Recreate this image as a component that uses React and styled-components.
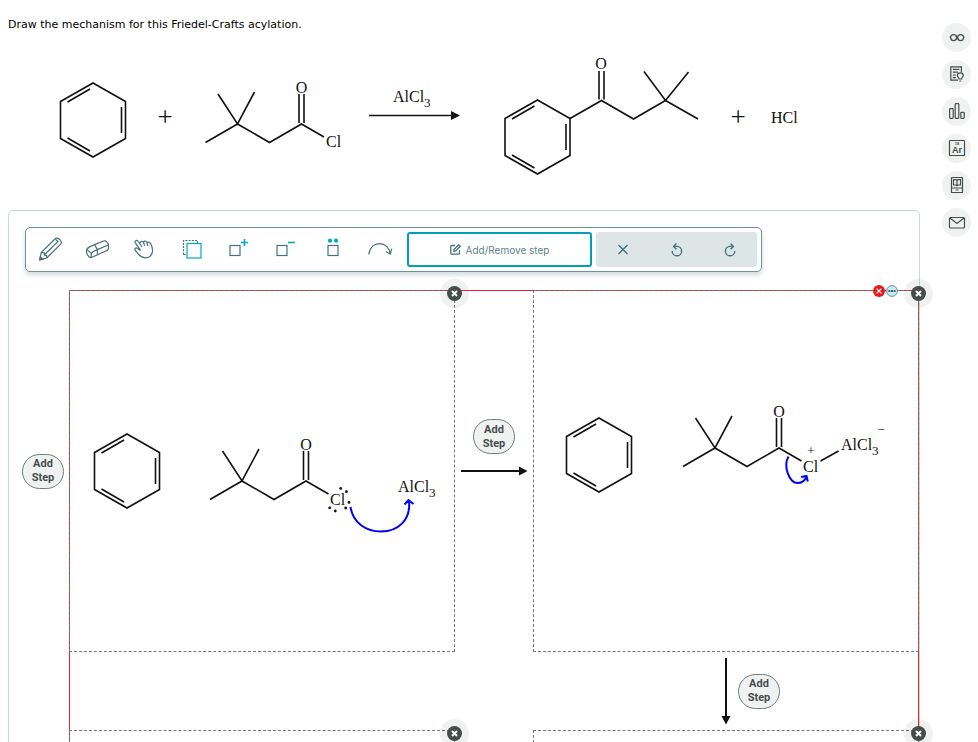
import React, { useState } from "react";
import styled, { createGlobalStyle } from "styled-components";

const INK = "#111111";
const SLATE = "#46717d";
const CYAN = "#00a9c9";
const GRAPHITE = "#454d4b";

/* ---------- chemistry drawing parts ---------- */

// ring centred on x, y
function Benzene({ x, y }) {
  return (
    <g transform={`translate(${x} ${y})`}>
      <path d="M0 -37 L32.5 -18.5 V18.5 L0 37 L-32.5 18.5 V-18.5 Z" />
      <path d="M-25.5 -18 L-3 -31 M28.5 -13 V13 M-25.5 18 L-3 31" />
    </g>
  );
}

// x, y is the carbonyl carbon
function AcylChloride({ x, y }) {
  return (
    <g transform={`translate(${x} ${y})`}>
      <path d="M-2.5 -1 V-30 M2.5 -1 V-30" />
      <path d="M22.5 13 L0 0 L-32 18.5 L-64 0 L-96 18.5 M-83.5 -30 L-64 0 L-47 -32" />
      <Atom x="0" y="-31" textAnchor="middle">
        O
      </Atom>
    </g>
  );
}

function AluminiumChloride({ x, y }) {
  return (
    <>
      <Atom x={x} y={y}>
        AlCl
      </Atom>
      <Atom x={x + 31} y={y + 5} $size={13}>
        3
      </Atom>
    </>
  );
}

function Reaction() {
  return (
    <Scheme viewBox="8 50 804 140" role="img" aria-label="Overall reaction">
      <Benzene x={93} y={120} />
      <Atom x="165" y="126" textAnchor="middle" $size={27}>
        +
      </Atom>
      <AcylChloride x={301.5} y={124} />
      <Atom x="326" y="147">
        Cl
      </Atom>

      <AluminiumChloride x={393} y={102} />
      <path d="M369 115.5 H452" />
      <path d="M451 111 L460 115.5 L451 120 Z" fill={INK} stroke="none" />

      <Benzene x={537.5} y={137} />
      <path d="M599 99.5 V71 M604 99.5 V71" />
      <path d="M570 118.5 L601.5 100.5 L633.5 119 L665.5 100.5 L698 119 M644 71.5 L665.5 100.5 L688.5 72" />
      <Atom x="601" y="69" textAnchor="middle">
        O
      </Atom>
      <Atom x="738" y="126" textAnchor="middle" $size={27}>
        +
      </Atom>
      <Atom x="771" y="123">
        HCl
      </Atom>
    </Scheme>
  );
}

function StepOneDrawing() {
  return (
    <StepDrawing viewBox="1 1 384 360" role="img" aria-label="Step 1">
      <Benzene x={58} y={181} />
      <AcylChloride x={237} y={191} />
      <Atom x="261" y="215">
        Cl
      </Atom>
      <g fill={INK} stroke="none">
        <circle cx="271.7" cy="198.4" r="1.4" />
        <circle cx="277.4" cy="201.7" r="1.4" />
        <circle cx="280" cy="212.4" r="1.4" />
        <circle cx="276.7" cy="218" r="1.4" />
        <circle cx="266.3" cy="221" r="1.4" />
        <circle cx="260.7" cy="217.8" r="1.4" />
      </g>
      <AluminiumChloride x={329} y={202} />
      <ElectronFlow d="M281.5 217 C284 233 297 241.5 312 241.5 C329 241.5 342 230 340 211 M335.5 214.5 L339.5 210 L344.5 214" />
    </StepDrawing>
  );
}

function StepTwoDrawing() {
  return (
    <StepDrawing viewBox="1 1 384 360" role="img" aria-label="Step 2">
      <Benzene x={66} y={165} />
      <AcylChloride x={246} y={158} />
      <Atom x="278" y="165" textAnchor="middle" $size={13}>
        +
      </Atom>
      <Atom x="270" y="182">
        Cl
      </Atom>
      <path d="M287.5 171 L305.5 161" />
      <AluminiumChloride x={308} y={160} />
      <Atom x="348" y="144" textAnchor="middle" $size={13}>
        −
      </Atom>
      <ElectronFlow d="M255.5 166.5 C250 176 256 193 265 193 C269 193 272 190 273.5 187 M268 187 L273.5 186 L274.8 191.5" />
    </StepDrawing>
  );
}

/* ---------- icons ---------- */

const IconLabel = styled.text`
  fill: ${GRAPHITE};
  stroke: none;
  font-family: "Liberation Sans", Arial, sans-serif;
  font-size: ${({ $size }) => $size}px;
  font-weight: 700;
  text-anchor: middle;
`;

const toolIcons = [
  {
    name: "Draw",
    icon: (
      <>
        <path d="M3 24.5 L4.2 17.5 L18 4 C19.5 2.6 21 3 22.3 4.2 L23.4 5.4 C24.8 6.8 24.6 8.2 23.4 9.4 L9.8 23 Z" />
        <path d="M4.2 17.5 L7.2 17.8 L7.4 20 L9.7 20.6 L9.8 23 M7.2 20 L21 6.4 L18.5 4.4" />
        <path d="M2.6 25 L3.2 21.8 L6 24.3 Z" fill={SLATE} />
      </>
    ),
  },
  {
    name: "Erase",
    icon: (
      <>
        <path d="M2.4 15.5 C2.6 13.4 4.4 12.4 6 11.6 L10.6 9.6 L19.5 6 C21.4 5.4 22 6 22.8 7 L24.4 9.2 V13.6 C24.2 15 23 15.6 22 16 L8 22.2 C6.4 22.8 5.4 22.4 4.6 21.4 L2.8 18.6 Z" />
        <path d="M2.8 14.6 L7.4 18.4 C8.4 16.4 10 15.8 13.4 14.6 L24.2 10 M7.4 18.4 L7 22.4 M10.6 9.6 L13.4 14.6 V19.6" />
      </>
    ),
  },
  {
    name: "Select",
    icon: (
      <path d="M9.6 15.4 L4.3 7.6 C3.4 6 5.6 4.6 6.8 6 L11 12 M8.8 8.8 C9 6 12 5.4 12.6 7.6 L13.6 10.8 M12.4 7.2 C13.2 5.6 15.6 5.8 16 7.8 L16.8 10.8 M16 7.8 C17 6.4 19 7 19.6 8.6 C21.4 12 22 14.4 21.4 17 C20.6 20.8 17.8 22.8 14.2 22.8 C9.6 22.8 8 20 6 17.4 L4.2 15.2 C3.2 13.6 4.8 12.4 6.2 13.2 L9.6 15.4" />
    ),
  },
  {
    name: "Marquee",
    icon: (
      <>
        <path d="M5.5 19.5 V5.5 H19.5 V8 M5.5 19.5 H9" strokeDasharray="2 1.2" />
        <rect x="9" y="8.5" width="14" height="14.5" stroke={CYAN} />
      </>
    ),
  },
  {
    name: "Increase charge",
    icon: (
      <>
        <rect x="5" y="10.5" width="10" height="10" />
        <path d="M16 7.5 H23 M19.5 4 V11" stroke={CYAN} strokeWidth="1.6" />
      </>
    ),
  },
  {
    name: "Decrease charge",
    icon: (
      <>
        <rect x="5" y="10.5" width="10" height="10" />
        <path d="M16 7.5 H23" stroke={CYAN} strokeWidth="1.6" />
      </>
    ),
  },
  {
    name: "Lone pair",
    icon: (
      <>
        <rect x="9" y="10.5" width="10" height="10" />
        <circle cx="11" cy="5.7" r="2.1" fill={CYAN} stroke="none" />
        <circle cx="17" cy="5.7" r="2.1" fill={CYAN} stroke="none" />
      </>
    ),
  },
  {
    name: "Electron flow",
    icon: (
      <path d="M2.8 19.5 C4 11.5 9 8.6 13.4 8.6 C19 8.6 23.5 12.5 24.2 19 M19.8 16.5 L24.2 19.2 L25.8 13.6" />
    ),
  },
];

const railIcons = [
  {
    name: "Glasses",
    icon: (
      <>
        <circle cx="11.6" cy="14.6" r="3" />
        <circle cx="18.6" cy="14.6" r="3" />
        <path d="M14 12.8 L16.2 16.2 M7.6 14 H8.6 M21.6 14 H22.6" />
      </>
    ),
  },
  {
    name: "Hints",
    icon: (
      <>
        <path d="M16 20.2 H8.8 V6.8 H19.4 V12.5" />
        <path d="M10.8 9.4 H17.4 M10.8 12.2 H16 M10.8 15 H14 M10.8 17.6 H14" />
        <path d="M18.3 12.8 C20.2 12.8 21.2 14 21.2 15.4 C21.2 17 19.6 17.4 19.6 19 H17 C17 17.4 15.4 17 15.4 15.4 C15.4 14 16.4 12.8 18.3 12.8 Z M17.4 21 H19.2" />
      </>
    ),
  },
  {
    name: "Statistics",
    icon: (
      <>
        <rect x="7.6" y="11.6" width="3.6" height="9.8" rx="0.8" />
        <rect x="13.2" y="6.6" width="3.6" height="14.8" rx="0.8" />
        <rect x="18.8" y="15.4" width="3.4" height="6" rx="0.8" />
      </>
    ),
  },
  {
    name: "Periodic table",
    icon: (
      <>
        <rect x="7.5" y="6.5" width="15" height="15" rx="0.6" />
        <IconLabel x="15" y="19" $size={9}>
          Ar
        </IconLabel>
        <IconLabel x="15" y="11" $size={4}>
          18
        </IconLabel>
      </>
    ),
  },
  {
    name: "References",
    icon: (
      <>
        <rect x="9.5" y="6.5" width="11" height="15" rx="0.6" />
        <path d="M11.5 8.6 H14 L15 9.4 L16 8.6 H18.5 V14 H16 L15 14.8 L14 14 H11.5 Z M15 9.4 V14.8 M9.5 17 H20.5 M13.5 19 H16.5" />
      </>
    ),
  },
  {
    name: "Messages",
    icon: (
      <>
        <rect x="7.5" y="9.5" width="15" height="10.5" rx="1" />
        <path d="M8 10 L15 15.4 L22 10" />
      </>
    ),
  },
];

/* ---------- interface parts ---------- */

function CloseStep() {
  return (
    <CloseButton aria-label="Remove step">
      <svg width="15" height="15" viewBox="0 0 15 15">
        <circle cx="7.5" cy="7.5" r="7.5" fill={GRAPHITE} />
        <path d="M5 5 L10 10 M10 5 L5 10" stroke="#fff" strokeWidth="1.9" />
      </svg>
    </CloseButton>
  );
}

function AddStep() {
  return (
    <AddButton>
      Add
      <br />
      Step
    </AddButton>
  );
}

function App() {
  const [tool, setTool] = useState(null);

  return (
    <>
      <GlobalStyle />
      <Page>
        <Main>
          <Question>Draw the mechanism for this Friedel-Crafts acylation.</Question>
          <Reaction />
          <Panel>
            <Toolbar>
              <Tools>
                {toolIcons.map((item) => (
                  <ToolButton
                    key={item.name}
                    aria-label={item.name}
                    aria-pressed={tool === item.name}
                    onClick={() => setTool(item.name)}
                  >
                    <svg width="27" height="27" viewBox="0 1 27 27">
                      {item.icon}
                    </svg>
                  </ToolButton>
                ))}
              </Tools>
              <StepToggle>
                <svg width="11" height="11" viewBox="0 0 11 11">
                  <path d="M5 1.5 H1.8 Q0.8 1.5 0.8 2.5 V9.2 Q0.8 10.2 1.8 10.2 H8.5 Q9.5 10.2 9.5 9.2 V6.2 M3.8 7.2 L4.2 5.2 L8.6 0.8 L10.2 2.4 L5.8 6.8 Z" />
                </svg>
                Add/Remove step
              </StepToggle>
              <History>
                <HistoryButton aria-label="Clear">
                  <svg width="14" height="14" viewBox="0 0 14 14">
                    <path d="M2.5 2 L11.5 11 M11.5 2 L2.5 11" />
                  </svg>
                </HistoryButton>
                <HistoryButton aria-label="Undo">
                  <svg width="14" height="14" viewBox="0 0 14 14">
                    <path d="M2.2 8 A4.7 4.7 0 1 0 7 3.4 H4 M6.4 0.6 L3.6 3.4 L6.4 6.2" />
                  </svg>
                </HistoryButton>
                <HistoryButton aria-label="Redo">
                  <svg width="14" height="14" viewBox="0 0 14 14">
                    <path d="M11.8 8 A4.7 4.7 0 1 1 7 3.4 H10 M7.6 0.6 L10.4 3.4 L7.6 6.2" />
                  </svg>
                </HistoryButton>
              </History>
            </Toolbar>

            <Board>
              <Frame />
              <Gutter>
                <AddStep />
              </Gutter>
              <Step $col={2} $row={1}>
                <StepOneDrawing />
                <CloseStep />
              </Step>
              <Across>
                <AddStep />
                <svg width="68" height="12" viewBox="0 0 68 12">
                  <path d="M1 6 H60" stroke={INK} strokeWidth="2" />
                  <path d="M59 1.5 L67.5 6 L59 10.5 Z" fill={INK} />
                </svg>
              </Across>
              <Step $col={4} $row={1}>
                <StepTwoDrawing />
                <Badges>
                  <svg width="12" height="12" viewBox="0 0 12 12">
                    <circle cx="6" cy="6" r="6" fill="#e8191f" />
                    <path d="M3.6 3.6 L8.4 8.4 M8.4 3.6 L3.6 8.4" stroke="#fff" strokeWidth="1.3" />
                  </svg>
                  <svg width="12" height="12" viewBox="0 0 12 12">
                    <circle cx="6" cy="6" r="5.4" fill="#cfe6ec" stroke="#5f99a8" />
                    <path d="M2.4 6 H9.6" stroke="#2d6d80" strokeWidth="2" strokeDasharray="2 0.6" />
                  </svg>
                </Badges>
                <CloseStep />
              </Step>
              <Down>
                <svg width="12" height="68" viewBox="0 0 12 68">
                  <path d="M6 1 V60" stroke={INK} strokeWidth="2" />
                  <path d="M1.5 59 H10.5 L6 67.5 Z" fill={INK} />
                </svg>
                <AddStep />
              </Down>
              <Step $col={2} $row={3}>
                <StepDrawing viewBox="1 1 384 360" />
                <CloseStep />
              </Step>
              <Step $col={4} $row={3}>
                <StepDrawing viewBox="1 1 384 360" />
                <CloseStep />
              </Step>
            </Board>
          </Panel>
        </Main>
        <Rail>
          {railIcons.map((item) => (
            <RailButton key={item.name} aria-label={item.name}>
              <svg width="29" height="29" viewBox="0 0 29 29">
                {item.icon}
              </svg>
            </RailButton>
          ))}
        </Rail>
      </Page>
    </>
  );
}

const GlobalStyle = createGlobalStyle`
  * {
    box-sizing: border-box;
  }

  body {
    margin: 0;
    background: #fff;
    color: #000;
  }

  button {
    margin: 0;
    padding: 0;
    border: 0;
    background: none;
    cursor: pointer;
  }

  svg {
    display: block;
  }
`;

const Page = styled.div`
  display: flex;
  height: 100vh;
  overflow: hidden;
`;

const Main = styled.main`
  flex: 1;
  min-width: 0;
  padding: 17px 0 0 8px;
`;

const Question = styled.p`
  margin: 0 0 17px;
  font-family: Verdana, "DejaVu Sans", sans-serif;
  font-size: 11px;
  line-height: 16px;
`;

const Scheme = styled.svg`
  width: 804px;
  max-width: 100%;
  margin-bottom: 20px;
  fill: none;
  stroke: ${INK};
  stroke-width: 1.6;
`;

const StepDrawing = styled.svg`
  width: 100%;
  fill: none;
  stroke: ${INK};
  stroke-width: 1.6;
`;

const Atom = styled.text`
  fill: ${INK};
  stroke: none;
  font-family: "Liberation Serif", "Times New Roman", serif;
  font-size: ${({ $size }) => $size || 16}px;
`;

const ElectronFlow = styled.path`
  stroke: #0000f5;
  stroke-width: 2;
`;

const Panel = styled.section`
  padding-top: 16px;
  border: 1px solid #c9d7d8;
  border-radius: 5px;
`;

const Toolbar = styled.div`
  display: flex;
  gap: 4px;
  width: fit-content;
  margin: 0 0 18px 16px;
  padding: 4px 4px 4px 1px;
  border: 1px solid #6f929a;
  border-radius: 5px;
  box-shadow: 0 3px 5px rgba(70, 113, 125, 0.25);
`;

const Tools = styled.div`
  display: flex;
`;

const ToolButton = styled.button`
  display: flex;
  align-items: center;
  justify-content: center;
  width: 47px;
  height: 35px;

  svg {
    fill: none;
    stroke: ${SLATE};
    stroke-width: 1.2;
  }
`;

const StepToggle = styled.button`
  display: flex;
  align-items: center;
  justify-content: center;
  gap: 5px;
  width: 185px;
  border: 2px solid #009fb7;
  border-radius: 3px;
  color: #5c7f89;
  font-family: Inter, sans-serif;
  font-size: 10px;

  svg {
    fill: none;
    stroke: ${SLATE};
    stroke-width: 1.3;
  }
`;

const History = styled.div`
  display: flex;
  width: 161px;
  border-radius: 3px;
  background: #dde5e7;
`;

const HistoryButton = styled.button`
  display: flex;
  flex: 1;
  align-items: center;
  justify-content: center;

  svg {
    fill: none;
    stroke: ${SLATE};
    stroke-width: 1.4;
  }
`;

const Board = styled.div`
  display: grid;
  grid-template-columns: 60px 1fr 78px 1fr;
  grid-template-rows: auto 78px auto;
`;

/* red outline that runs behind the dashed step boxes */
const Frame = styled.div`
  grid-column: 2 / 5;
  grid-row: 1 / 4;
  border: 1px solid #e8202a;
`;

const Gutter = styled.div`
  display: flex;
  grid-column: 1;
  grid-row: 1;
  align-items: center;
  justify-content: flex-end;
  padding-right: 5px;
`;

const Step = styled.div`
  position: relative;
  grid-column: ${({ $col }) => $col};
  grid-row: ${({ $row }) => $row};
  border: 1px dashed #777;
`;

const Across = styled.div`
  display: grid;
  grid-column: 3;
  grid-row: 1;
  grid-template-rows: 1fr auto 1fr;
  gap: 11px;
  justify-items: center;

  button {
    align-self: end;
  }
`;

const Down = styled.div`
  display: grid;
  grid-column: 4;
  grid-row: 2;
  grid-template-columns: 1fr auto 1fr;
  gap: 6px;
  align-items: center;

  svg {
    grid-column: 2;
  }
`;

const AddButton = styled.button`
  width: 42px;
  height: 35px;
  border: 1px solid #6d7f7b;
  border-radius: 18px;
  background: #f0f2f1;
  color: ${GRAPHITE};
  font-family: Roboto, sans-serif;
  font-size: 11px;
  font-weight: 700;
  line-height: 14px;
`;

const CloseButton = styled.button`
  position: absolute;
  top: -12px;
  right: -15px;
  z-index: 1;
  display: flex;
  align-items: center;
  justify-content: center;
  width: 29px;
  height: 29px;
  border-radius: 50%;
  background: rgba(69, 90, 85, 0.08);
`;

const Badges = styled.div`
  position: absolute;
  top: -6px;
  right: 20px;
  display: flex;
  gap: 1px;
`;

const Rail = styled.aside`
  display: flex;
  flex-direction: column;
  gap: 8px;
  width: 58px;
  padding: 23px 0 0 22px;
`;

const RailButton = styled.button`
  width: 29px;
  height: 29px;
  border-radius: 50%;
  background: #f0f2f1;

  svg {
    fill: none;
    stroke: ${GRAPHITE};
    stroke-width: 1.2;
  }
`;

export default App;
